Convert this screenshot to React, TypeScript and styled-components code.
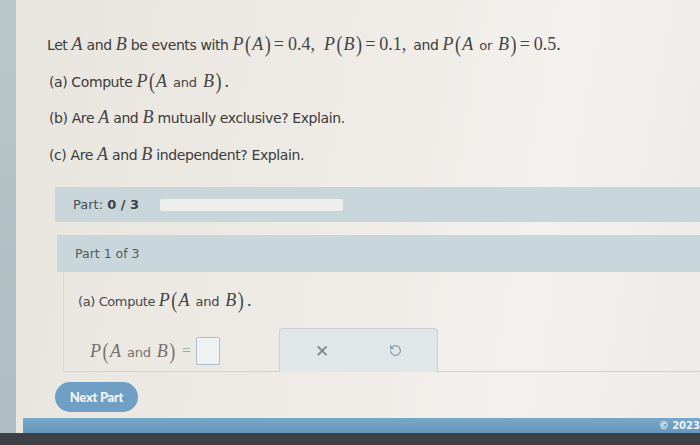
import React from "react";
import styled, { createGlobalStyle } from "styled-components";
import { RotateCcw } from "lucide-react";

const Global = createGlobalStyle`
  html, body { margin: 0; padding: 0; }
  body { width: 700px; height: 445px; overflow: hidden; background: #ebe8e3; }
  #root { width: 700px; height: 445px; }
`;

const Page = styled.div`
  width: 700px;
  height: 445px;
  display: flex;
  flex-direction: column;
  background: linear-gradient(100deg, #e8e4de 0%, #eeebe6 45%, #f3f1ee 75%, #eeece9 100%);
  font-family: "DejaVu Sans", Verdana, sans-serif;
  color: #3d3d3d;
`;

const Body = styled.div`
  flex: 1;
  display: flex;
  min-height: 0;
`;

const LeftStrip = styled.div`
  width: 16px;
  flex: none;
  background: linear-gradient(180deg, #b9c6ca 0%, #aebdc2 100%);
`;

const Main = styled.div`
  flex: 1;
  display: flex;
  flex-direction: column;
  min-width: 0;
`;

const Question = styled.div`
  padding: 33px 0 0 31px;
  display: flex;
  flex-direction: column;
  gap: 13.5px;
  height: 157px;
  box-sizing: border-box;
`;

const Line = styled.div<{ $indent?: number }>`
  height: 23px;
  line-height: 23px;
  font-size: 14px;
  letter-spacing: -0.4px;
  white-space: nowrap;
  padding-left: ${(p) => p.$indent ?? 0}px;
  color: #3a3a3a;
`;

const Mi = styled.span`
  font-family: "Liberation Serif", "Times New Roman", serif;
  font-style: italic;
  font-size: 18px;
  color: #444;
  letter-spacing: 0;
  word-spacing: 0;
`;

const Mo = styled.span`
  font-family: "Liberation Serif", "Times New Roman", serif;
  font-size: 18px;
  color: #444;
  letter-spacing: 0;
  margin: 0 2px;
`;

const Paren = styled.span`
  display: inline-block;
  font-family: "Liberation Serif", "Times New Roman", serif;
  font-size: 18px;
  line-height: 17px;
  color: #444;
  transform: scaleY(1.3);
  margin: 0 1.5px;
`;

const Word = styled.span`
  font-size: 13px;
  letter-spacing: -0.2px;
  margin: 0 6px;
  color: #444;
`;

const Sp = styled.span<{ $w: number }>`
  display: inline-block;
  width: ${(p) => p.$w}px;
`;

const PartBar = styled.div`
  margin: 30px 0 0 39px;
  height: 35px;
  background: #c8d5db;
  border-radius: 2px 0 0 2px;
  display: flex;
  align-items: center;
  padding-left: 18px;
  gap: 21px;
  font-size: 13px;
  color: #4a4f52;
`;

const Bold = styled.b`
  font-weight: bold;
  color: #3c4044;
`;

const Progress = styled.div`
  width: 183px;
  height: 12px;
  background: #eeeeec;
  border-radius: 2px;
`;

const PartHeader = styled.div`
  margin: 13px 0 0 41px;
  height: 37px;
  background: #c9d6dc;
  display: flex;
  align-items: center;
  padding-left: 18px;
  font-size: 12.5px;
  color: #55595c;
`;

const Content = styled.div`
  margin-left: 47px;
  height: 100px;
  border-left: 1px solid #d6d8d6;
  border-bottom: 1px solid #cdd3d4;
  box-sizing: border-box;
  display: flex;
  flex-direction: column;
`;

const SubQ = styled.div`
  height: 23px;
  line-height: 23px;
  margin: 17px 0 0 14px;
  font-size: 13px;
  letter-spacing: -0.4px;
  color: #4a4a4a;
  white-space: nowrap;
`;

const AnswerRow = styled.div`
  display: flex;
  align-items: flex-end;
  margin-top: 16px;
  padding-left: 26px;
`;

const Equation = styled.div`
  display: flex;
  align-items: center;
  height: 28px;
  margin-bottom: 7px;
  white-space: nowrap;
  color: #666;
`;

const Faint = styled.span`
  opacity: 0.72;
  white-space: nowrap;
`;

const Eq = styled.span`
  font-family: "Liberation Serif", serif;
  font-size: 16px;
  color: #9aa;
  margin: 0 5px 0 5px;
`;

const Box = styled.div`
  width: 22px;
  height: 26px;
  border: 1px solid #a8c3cf;
  background: #eef2f2;
  border-radius: 1px;
`;

const Tools = styled.div`
  margin-left: 59px;
  width: 159px;
  height: 44px;
  box-sizing: border-box;
  border: 1px solid #c9d2d5;
  border-bottom: none;
  border-radius: 4px 4px 0 0;
  background: #e1e7e7;
  display: flex;
  align-items: center;
  gap: 60px;
  padding: 0 0 0 35px;
  color: #7d8d95;
`;

const XMark = styled.span`
  font-family: "DejaVu Sans", sans-serif;
  font-size: 17px;
  font-weight: 300;
  color: #7a8990;
`;

const NextBtn = styled.button`
  margin: 10px 0 0 39px;
  width: 83px;
  height: 30px;
  border: none;
  border-radius: 15px;
  background: #6f9fc4;
  color: #f4f7fa;
  font-family: "Lato", "Open Sans", sans-serif;
  font-weight: 900;
  font-size: 13px;
  letter-spacing: -0.3px;
  align-self: flex-start;
`;

const Footer = styled.div`
  margin-top: auto;
  height: 15px;
  background: linear-gradient(180deg, #79a7c8, #6596bb);
  display: flex;
  justify-content: flex-end;
  align-items: center;
  font-size: 10px;
  font-weight: bold;
  color: #eef3f7;
  margin-left: 7px;
`;

const Bottom = styled.div`
  height: 12px;
  background: #3d4045;
  flex: none;
`;

const Spacer = styled.div`
  height: 5px;
`;

export default function App() {
  return (
    <>
      <Global />
      <Page>
        <Body>
          <LeftStrip />
          <Main>
            <Question>
              <Line>
                Let <Mi>A</Mi> and <Mi>B</Mi> be events with{" "}
                <Mi>P</Mi><Paren>(</Paren><Mi>A</Mi><Paren>)</Paren><Mo>=</Mo><Mo>0.4,</Mo>
                <Sp $w={7} />
                <Mi>P</Mi><Paren>(</Paren><Mi>B</Mi><Paren>)</Paren><Mo>=</Mo><Mo>0.1,</Mo>
                <Sp $w={5} />
                and <Mi>P</Mi><Paren>(</Paren><Mi>A</Mi><Word>or</Word><Mi>B</Mi><Paren>)</Paren><Mo>=</Mo><Mo>0.5.</Mo>
              </Line>
              <Line $indent={2}>
                (a) Compute <Mi>P</Mi><Paren>(</Paren><Mi>A</Mi><Word>and</Word><Mi>B</Mi><Paren>)</Paren><Mo>.</Mo>
              </Line>
              <Line $indent={2}>
                (b) Are <Mi>A</Mi> and <Mi>B</Mi> mutually exclusive? Explain.
              </Line>
              <Line $indent={2}>
                (c) Are <Mi>A</Mi> and <Mi>B</Mi> independent? Explain.
              </Line>
            </Question>
            <PartBar>
              <span>
                Part: <Bold>0 / 3</Bold>
              </span>
              <Progress />
            </PartBar>
            <PartHeader>Part 1 of 3</PartHeader>
            <Content>
              <SubQ>
                (a) Compute <Mi>P</Mi><Paren>(</Paren><Mi>A</Mi><Word>and</Word><Mi>B</Mi><Paren>)</Paren><Mo>.</Mo>
              </SubQ>
              <AnswerRow>
                <Equation>
                  <Faint>
                    <Mi>P</Mi><Paren>(</Paren><Mi>A</Mi><Word>and</Word><Mi>B</Mi><Paren>)</Paren>
                  </Faint>
                  <Eq>=</Eq>
                  <Box />
                </Equation>
                <Tools>
                  <XMark>✕</XMark>
                  <RotateCcw size={13} strokeWidth={2} color="#7e9aa8" />
                </Tools>
              </AnswerRow>
            </Content>
            <NextBtn>Next Part</NextBtn>
            <Spacer />
            <Footer>© 2023</Footer>
          </Main>
        </Body>
        <Bottom />
      </Page>
    </>
  );
}
